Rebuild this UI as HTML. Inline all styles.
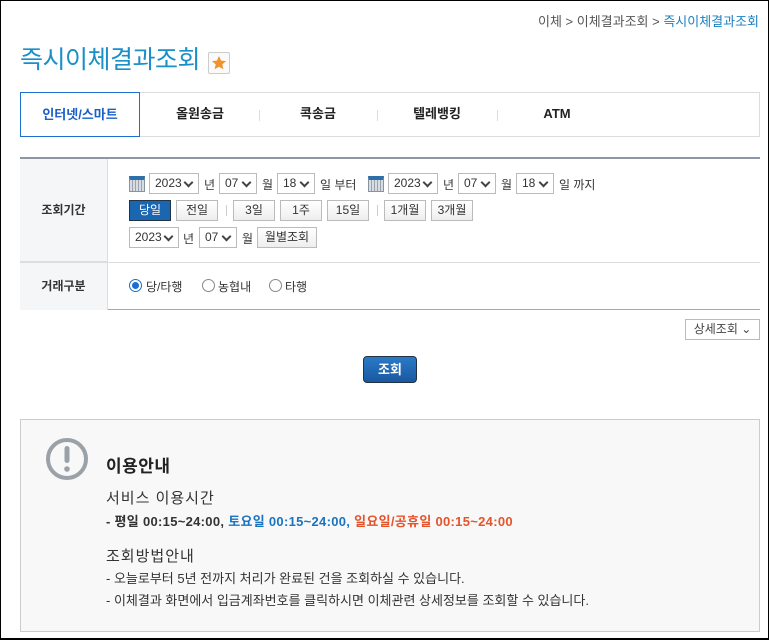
<!DOCTYPE html>
<html><head><meta charset="utf-8"><style>
*{box-sizing:border-box;margin:0;padding:0}
body{width:769px;height:640px;overflow:hidden;background:#fff;font-family:"Liberation Sans","Noto Sans CJK KR","NanumGothic",sans-serif;font-size:12px;color:#333;position:relative}
.frame{position:absolute;left:0;top:0;width:769px;height:640px;border:1px solid #000;border-bottom:2px solid #000}
.abs{position:absolute}
.crumb{right:10px;top:11px;font-size:13px;color:#555;white-space:nowrap}
.crumb b{font-weight:normal;color:#1a7fc0}
h1{position:absolute;left:20px;top:40px;font-size:25px;font-weight:normal;color:#1a8fc8;letter-spacing:-0.5px}
.star{left:208px;top:52px;width:22px;height:22px;border:1px solid #ccc;border-radius:2px;background:#fafafa}
.tabs{left:20px;top:92px;width:740px;height:45px;border:1px solid #ddd}
.tab{position:absolute;top:-1px;height:45px;line-height:44px;text-align:center;font-size:13px;font-weight:bold;color:#222}
.tab.on{border:1px solid #1a6fd0;color:#1a5fc8;left:-1px;width:120px}
.sep{position:absolute;top:17px;width:1px;height:11px;background:#ddd}
.tbl{left:20px;top:157px;width:740px;height:153px;border-top:2px solid #8e98a4;border-bottom:1px solid #a0a8b0}
.lab{position:absolute;left:0;width:88px;background:#f5f6f7;border-right:1px solid #ddd;text-align:center;font-weight:bold;color:#333;font-size:12px}
.sel{position:absolute;height:21px;border:1px solid #bbb;background:#fff;font-size:12px;line-height:19px;padding-left:5px;color:#333}
.sel:after{content:"";position:absolute;right:6px;top:5px;width:5px;height:5px;border-right:2px solid #444;border-bottom:2px solid #444;transform:rotate(45deg)}
.btn{position:absolute;height:21px;border:1px solid #bbb;background:linear-gradient(#fff,#eee);text-align:center;line-height:19px;font-size:12px;color:#333}
.t{position:absolute;font-size:12px;color:#333;white-space:nowrap}
.cal{position:absolute;width:16px;height:16px;background:repeating-linear-gradient(90deg,#d8dde3 0 2px,#9aa3ad 2px 3px);border-top:4px solid #2f6fa8;border-left:1px solid #8893a0;border-right:1px solid #8893a0;border-bottom:1px solid #8893a0}
.radio{position:absolute;width:13px;height:13px;border:1px solid #888;border-radius:50%;background:#fff}
.radio.on{border-color:#1a6fd0}
.radio.on:after{content:"";position:absolute;left:2px;top:2px;width:7px;height:7px;border-radius:50%;background:#1a6fd0}
.info{left:20px;top:419px;width:740px;height:213px;background:#f8f8f8;border:1px solid #ccc}
</style></head><body>
<div class="abs crumb">이체 &gt; 이체결과조회 &gt; <b>즉시이체결과조회</b></div>
<h1>즉시이체결과조회</h1>
<div class="abs star"><svg width="20" height="20" viewBox="0 0 20 20"><path d="M10 3l2.1 4.6 5 .5-3.8 3.3 1.1 4.9L10 13.8 5.6 16.3l1.1-4.9L2.9 8.1l5-.5z" fill="#f0932b"/></svg></div>
<div class="abs tabs">
<div class="tab on">인터넷/스마트</div>
<div class="tab" style="left:120px;width:118px">올원송금</div>
<div class="sep" style="left:238px"></div>
<div class="tab" style="left:238px;width:118px">콕송금</div>
<div class="sep" style="left:356px"></div>
<div class="tab" style="left:356px;width:120px">텔레뱅킹</div>
<div class="sep" style="left:476px"></div>
<div class="tab" style="left:476px;width:120px">ATM</div>
</div>
<div class="abs tbl">
<div class="lab" style="top:0;height:103px;line-height:103px;border-bottom:1px solid #ddd">조회기간</div>
<div class="abs" style="left:0;top:103px;width:740px;height:1px;background:#ddd"></div>
<div class="lab" style="top:104px;height:47px;line-height:47px">거래구분</div>
</div>
<div class="cal" style="left:129px;top:176px"></div>
<div class="sel" style="left:149px;top:173px;width:50px">2023</div><div class="t" style="left:204px;top:176px">년</div>
<div class="sel" style="left:219px;top:173px;width:38px">07</div><div class="t" style="left:262px;top:176px">월</div>
<div class="sel" style="left:277px;top:173px;width:38px">18</div><div class="t" style="left:320px;top:176px">일 부터</div>
<div class="cal" style="left:368px;top:176px"></div>
<div class="sel" style="left:388px;top:173px;width:50px">2023</div><div class="t" style="left:443px;top:176px">년</div>
<div class="sel" style="left:458px;top:173px;width:38px">07</div><div class="t" style="left:501px;top:176px">월</div>
<div class="sel" style="left:516px;top:173px;width:38px">18</div><div class="t" style="left:559px;top:176px">일 까지</div>
<div class="btn" style="left:129px;top:200px;width:42px;background:#1a66b0;border-color:#234;color:#fff">당일</div>
<div class="btn" style="left:176px;top:200px;width:42px">전일</div>
<div class="abs" style="left:226px;top:205px;width:1px;height:11px;background:#ccc"></div>
<div class="btn" style="left:233px;top:200px;width:42px">3일</div>
<div class="btn" style="left:280px;top:200px;width:42px">1주</div>
<div class="btn" style="left:327px;top:200px;width:42px">15일</div>
<div class="abs" style="left:377px;top:205px;width:1px;height:11px;background:#ccc"></div>
<div class="btn" style="left:384px;top:200px;width:42px">1개월</div>
<div class="btn" style="left:431px;top:200px;width:42px">3개월</div>
<div class="sel" style="left:129px;top:227px;width:50px">2023</div><div class="t" style="left:183px;top:230px">년</div>
<div class="sel" style="left:199px;top:227px;width:38px">07</div><div class="t" style="left:242px;top:230px">월</div>
<div class="btn" style="left:257px;top:227px;width:60px">월별조회</div>
<div class="radio on" style="left:129px;top:279px"></div><div class="t" style="left:146px;top:278px">당/타행</div>
<div class="radio" style="left:202px;top:279px"></div><div class="t" style="left:218px;top:278px">농협내</div>
<div class="radio" style="left:269px;top:279px"></div><div class="t" style="left:285px;top:278px">타행</div>
<div class="btn" style="left:685px;top:319px;width:75px;background:#fff;color:#444">상세조회 ⌄</div>
<div class="btn" style="left:363px;top:356px;width:54px;height:27px;line-height:25px;border-radius:4px;background:linear-gradient(#2a7ac8,#1a58a0);border-color:#234;color:#fff;font-weight:bold;font-size:13px">조회</div>
<div class="abs info">
<svg class="abs" style="left:24px;top:17px" width="44" height="44" viewBox="0 0 44 44"><circle cx="22" cy="22" r="19" fill="none" stroke="#9aa1a9" stroke-width="4"/><rect x="19.5" y="9" width="5" height="17" rx="2.5" fill="#9aa1a9"/><circle cx="22" cy="32" r="2.8" fill="#9aa1a9"/></svg>
<div class="t" style="left:85px;top:32px;font-size:17px;color:#222;font-weight:bold;letter-spacing:0.5px">이용안내</div>
<div class="t" style="left:85px;top:67px;font-size:15px;color:#333;letter-spacing:1px">서비스 이용시간</div>
<div class="t" style="left:85px;top:91px;font-weight:bold;color:#333;font-size:13px;letter-spacing:0.3px">- 평일 00:15~24:00, <span style="color:#1a74c0">토요일 00:15~24:00,</span> <span style="color:#e5532a">일요일/공휴일 00:15~24:00</span></div>
<div class="t" style="left:85px;top:125px;font-size:15px;color:#333;letter-spacing:1px">조회방법안내</div>
<div class="t" style="left:85px;top:148px;font-size:13px">- 오늘로부터 5년 전까지 처리가 완료된 건을 조회하실 수 있습니다.</div>
<div class="t" style="left:85px;top:170px;font-size:13px">- 이체결과 화면에서 입금계좌번호를 클릭하시면 이체관련 상세정보를 조회할 수 있습니다.</div>
</div>
<div class="frame"></div>
</body></html>
